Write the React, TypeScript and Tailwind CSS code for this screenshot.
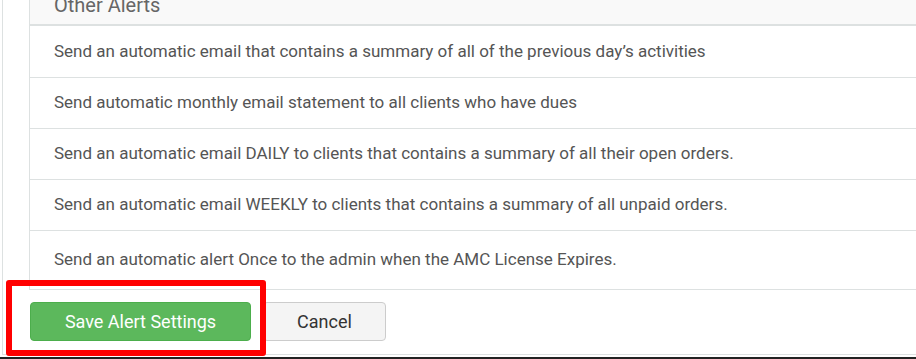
const alerts = [
  "Send an automatic email that contains a summary of all of the previous day\u2019s activities",
  "Send automatic monthly email statement to all clients who have dues",
  "Send an automatic email DAILY to clients that contains a summary of all their open orders.",
  "Send an automatic email WEEKLY to clients that contains a summary of all unpaid orders.",
  "Send an automatic alert Once to the admin when the AMC License Expires.",
];

export default function App() {
  return (
    <div
      className="relative h-[359px] w-[916px] overflow-hidden bg-white"
      style={{ fontFamily: "Roboto, 'Liberation Sans', sans-serif" }}
    >
      <div className="ml-[2px] h-[355px] border-b border-l border-[#dde1e1]">
        <div className="ml-[26px] border-l border-[#dde1e1]">
          {/* header, scrolled partly out of view */}
          <div className="h-[25px] overflow-hidden border-b border-[#dde1e1] bg-[#f9f9f9] pl-[24px]">
            <div className="-mt-[5px] text-[20px] leading-[20px] text-[#666]">Other Alerts</div>
          </div>
          {alerts.map((text, i) => (
            <div
              key={text}
              className={
                i === 0
                  ? "flex h-[52px] items-center border-t border-[#dde1e1] pl-[24px] text-[17px] text-[#555]"
                  : i === alerts.length - 1
                    ? "flex h-[60px] items-center border-y border-[#dde1e1] pl-[24px] text-[17px] text-[#555]"
                    : "flex h-[51px] items-center border-t border-[#dde1e1] pl-[24px] text-[17px] text-[#555]"
              }
            >
              {text}
            </div>
          ))}
        </div>
        <div className="flex gap-[12px] pl-[27px] pt-[12px]">
          <button className="h-[39px] w-[221px] rounded-[4px] border border-[#4cae4c] bg-[#5cb85c] text-[18px] text-white">
            Save Alert Settings
          </button>
          <button className="h-[39px] w-[123px] rounded-[4px] border border-[#cccccc] bg-[#f4f4f4] text-[18px] text-[#333]">
            Cancel
          </button>
        </div>
      </div>
      <div className="absolute bottom-0 left-0 h-[2px] w-full bg-[#222]" />
      {/* highlight box */}
      <div className="absolute left-[6px] top-[280px] h-[76px] w-[260px] rounded-[3px] border-[6px] border-[#ff0000]" />
    </div>
  );
}
